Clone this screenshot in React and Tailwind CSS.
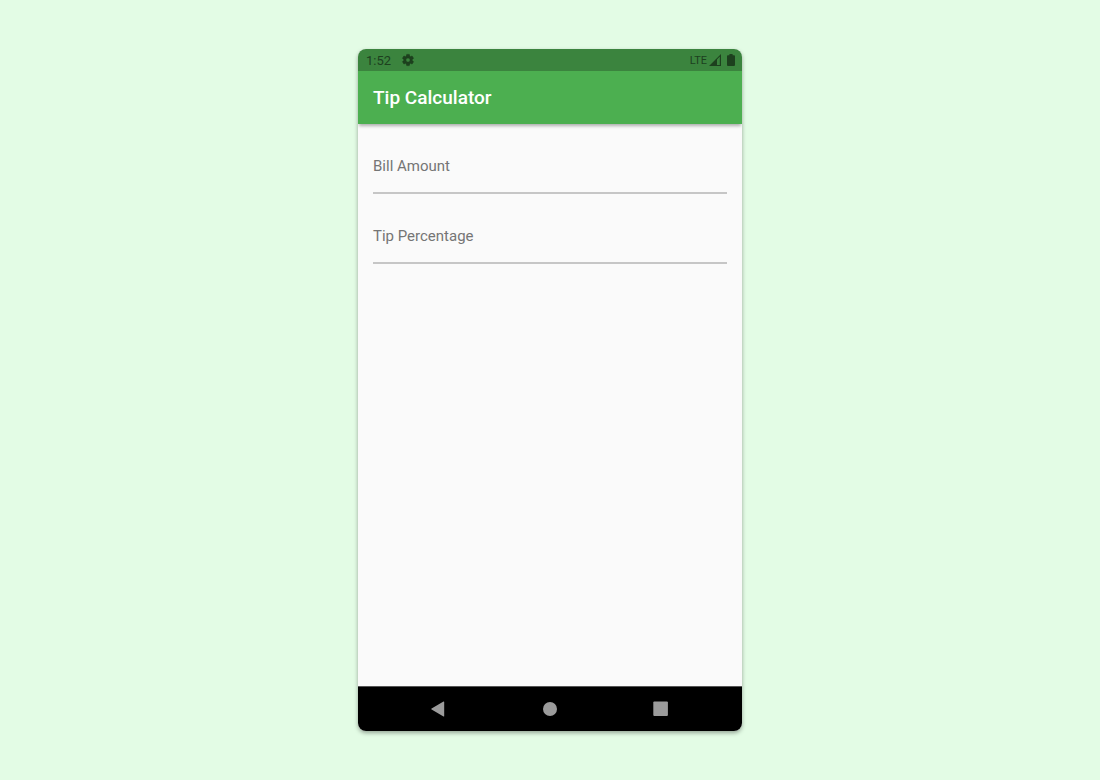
import { useState } from 'react'

const FIELDS = [
  { id: 'bill-amount', label: 'Bill Amount' },
  { id: 'tip-percentage', label: 'Tip Percentage' },
]

function GearIcon({ className }) {
  return (
    <svg viewBox="0 0 24 24" fill="currentColor" className={className} aria-hidden="true">
      <path
        fillRule="evenodd"
        stroke="currentColor"
        strokeWidth="1"
        d="M19.14 12.94c.04-.3.06-.61.06-.94 0-.32-.02-.64-.07-.94l2.03-1.58a.49.49 0 0 0 .12-.61l-1.92-3.32a.488.488 0 0 0-.59-.22l-2.39.96c-.5-.38-1.03-.7-1.62-.94l-.36-2.54a.484.484 0 0 0-.48-.41h-3.84c-.24 0-.43.17-.47.41l-.36 2.54c-.59.24-1.13.57-1.62.94l-2.39-.96c-.22-.08-.47 0-.59.22L2.74 8.87c-.12.21-.08.47.12.61l2.03 1.58c-.05.3-.09.63-.09.94s.02.64.07.94l-2.03 1.58a.49.49 0 0 0-.12.61l1.92 3.32c.12.22.37.29.59.22l2.39-.96c.5.38 1.03.7 1.62.94l.36 2.54c.05.24.24.41.48.41h3.84c.24 0 .44-.17.47-.41l.36-2.54c.59-.24 1.13-.56 1.62-.94l2.39.96c.22.08.47 0 .59-.22l1.92-3.32c.12-.22.07-.47-.12-.61l-2.01-1.58zM12 15.6c-1.98 0-3.6-1.62-3.6-3.6s1.62-3.6 3.6-3.6 3.6 1.62 3.6 3.6-1.62 3.6-3.6 3.6z"
      />
    </svg>
  )
}

function SignalIcon({ className }) {
  return (
    <svg viewBox="0 0 12 12" fill="currentColor" className={className} aria-hidden="true">
      <path fillRule="evenodd" d="M0 12L12 0V12zM8 5.4V11H10.8V2.6z" />
    </svg>
  )
}

function BatteryIcon({ className }) {
  return (
    <svg viewBox="0 0 8 12" fill="currentColor" className={className} aria-hidden="true">
      <path d="M2.4 0h3.2v1.2h1.5c.5 0 .9.4.9.9v9c0 .5-.4.9-.9.9H.9c-.5 0-.9-.4-.9-.9v-9c0-.5.4-.9.9-.9h1.5z" />
    </svg>
  )
}

function StatusBar() {
  return (
    <div className="flex h-[22px] items-center justify-between bg-[#3b843e] pr-[7px] pl-2 text-[#1d401e]">
      <div className="flex items-center gap-2.5">
        <span className="text-[13px] leading-none">1:52</span>
        <GearIcon className="size-3.5" />
      </div>
      <div className="flex items-center gap-1.5">
        <div className="flex items-center gap-0.5">
          <span className="text-[11px] leading-none">LTE</span>
          <SignalIcon className="size-3" />
        </div>
        <BatteryIcon className="h-3 w-2" />
      </div>
    </div>
  )
}

function Field({ id, label, value, onChange }) {
  return (
    <div className="flex flex-col">
      <label htmlFor={id} className="text-[15px] leading-5 text-[#757575]">
        {label}
      </label>
      <input
        id={id}
        type="text"
        inputMode="decimal"
        value={value}
        onChange={(e) => onChange(e.target.value)}
        className="h-[18px] w-full border-b-2 border-[#c6c6c6] bg-transparent text-[15px] text-gray-900 focus:border-[#4caf50] focus:outline-none"
      />
    </div>
  )
}

function NavButton({ label, children }) {
  return (
    <button type="button" aria-label={label} className="flex size-11 items-center justify-center text-[#9b9b9b]">
      <svg viewBox="0 0 16 16" fill="currentColor" className="size-4" aria-hidden="true">
        {children}
      </svg>
    </button>
  )
}

export default function App() {
  const [values, setValues] = useState({})

  return (
    <div className="flex min-h-screen justify-center bg-[#e3fce5] py-[49px] font-['Roboto',sans-serif]">
      <div className="flex w-full max-w-96 flex-col overflow-hidden rounded-lg bg-[#fafafa] shadow-[0_2px_4px_rgba(0,0,0,0.35)]">
        <StatusBar />
        <header className="flex h-[53px] items-center bg-[#4caf50] px-[15px] pt-0.5 shadow-[0_3px_3px_-1px_rgba(0,0,0,0.3)]">
          <h1 className="text-[19px] font-medium text-white">Tip Calculator</h1>
        </header>
        <main className="flex flex-1 flex-col gap-8 px-[15px] pt-8">
          {FIELDS.map((field) => (
            <Field
              key={field.id}
              id={field.id}
              label={field.label}
              value={values[field.id] ?? ''}
              onChange={(value) => setValues({ ...values, [field.id]: value })}
            />
          ))}
        </main>
        <nav className="flex h-[45px] items-center justify-center gap-[67px] border-t border-[#555555] bg-black">
          <NavButton label="Back">
            <path d="M.6 7.4L12.5.5q.7-.2.7.6v13.8q0 .8-.7.6L.6 8.6q-.8-.6 0-1.2z" />
          </NavButton>
          <NavButton label="Home">
            <circle cx="8" cy="8" r="7" />
          </NavButton>
          <NavButton label="Overview">
            <rect x="0.3" y="0.5" width="14.6" height="14.6" rx="1" />
          </NavButton>
        </nav>
      </div>
    </div>
  )
}
